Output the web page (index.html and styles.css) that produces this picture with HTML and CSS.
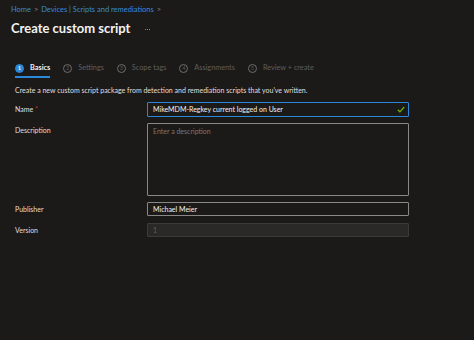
FILE: index.html
```html
<!DOCTYPE html>
<html lang="en">
<head>
    <meta charset="UTF-8">
    <title>Create custom script</title>
    <link rel="stylesheet" href="styles.css">
</head>
<body>
    <div class="breadcrumb">
        <a href="#">Home</a> <span class="sep">&gt;</span> <a href="#">Devices | Scripts and remediations</a> <span class="sep">&gt;</span>
    </div>
    <div class="title-row">
        <h1 class="title">Create custom script</h1>
        <span class="more"><i></i><i></i><i></i></span>
    </div>

    <div class="steps">
        <div class="step active"><span class="num">1</span>Basics</div>
        <div class="step"><span class="num">2</span>Settings</div>
        <div class="step"><span class="num">3</span>Scope tags</div>
        <div class="step"><span class="num">4</span>Assignments</div>
        <div class="step"><span class="num">5</span>Review + create</div>
    </div>

    <p class="intro">Create a new custom script package from detection and remediation scripts that you've written.</p>

    <div class="form">
        <div class="row">
            <label class="label">Name <span class="req">*</span></label>
            <div class="field valid">
                <span class="value">MikeMDM-Regkey current logged on User</span>
                <svg class="check" width="8" height="7" viewBox="0 0 8 7"><path d="M0.8 3.8 L2.9 5.8 L7.2 1" fill="none" stroke="#6bb700" stroke-width="1.2"/></svg>
            </div>
        </div>
        <div class="row">
            <label class="label">Description</label>
            <div class="field area"><span class="placeholder">Enter a description</span></div>
        </div>
        <div class="row">
            <label class="label">Publisher</label>
            <div class="field short"><span class="value">Michael Meier</span></div>
        </div>
        <div class="row">
            <label class="label">Version</label>
            <div class="field short disabled"><span class="value">1</span></div>
        </div>
    </div>
</body>
</html>
```
FILE: styles.css
```css
body {
    margin: 0;
    padding: 5px 0 0 11px;
    background-color: #1b1a19;
    color: #d2d0ce;
    font-family: Lato, "Open Sans", sans-serif;
    width: 474px;
    height: 340px;
    box-sizing: border-box;
    overflow: hidden;
}
.breadcrumb {
    font-size: 7.5px;
    line-height: 10px;
    color: #3a8ad6;
}
.breadcrumb a {
    color: #3a8ad6;
    text-decoration: none;
}
.breadcrumb .sep {
    color: #8a8886;
    margin: 0 1px;
}
.title-row {
    display: flex;
    align-items: center;
    gap: 15px;
    margin-top: 3px;
}
.title {
    margin: 0;
    font-size: 13px;
    line-height: 20px;
    font-weight: 700;
    color: #f3f2f1;
}
.more {
    display: flex;
    gap: 1px;
    padding-top: 2px;
}
.more i {
    width: 1px;
    height: 1px;
    background-color: #8a8886;
}
.steps {
    display: flex;
    gap: 13px;
    margin-top: 25px;
    padding-left: 4px;
}
.step {
    display: flex;
    align-items: center;
    gap: 6px;
    font-size: 7.3px;
    line-height: 10px;
    color: #5f5e5c;
    padding-bottom: 3px;
    border-bottom: 2px solid transparent;
}
.step .num {
    width: 7px;
    height: 7px;
    border: 1px solid #6e6d6b;
    border-radius: 50%;
    font-size: 5px;
    line-height: 7px;
    text-align: center;
}
.step.active {
    color: #f3f2f1;
    font-weight: 700;
    border-bottom-color: #2b88d8;
}
.step.active .num {
    background-color: #2b88d8;
    border-color: #2b88d8;
    color: #fff;
}
.intro {
    margin: 7px 0 0 4px;
    font-size: 7px;
    line-height: 10px;
    color: #e1dfdd;
}
.form {
    display: flex;
    flex-direction: column;
    gap: 6px;
    margin-top: 7px;
    padding-left: 4px;
}
.row {
    display: flex;
    align-items: flex-start;
}
.label {
    width: 132px;
    font-size: 7px;
    line-height: 15px;
    color: #e1dfdd;
}
.req {
    color: #d13438;
}
.field {
    position: relative;
    width: 262px;
    height: 15px;
    box-sizing: border-box;
    border: 1px solid #8a8886;
    border-radius: 1px;
    padding: 0 5px;
    font-size: 7px;
    line-height: 13px;
    color: #f3f2f1;
}
.field.short {
    height: 14px;
    line-height: 12px;
}
.field.valid {
    border-color: #2b88d8;
}
.field .check {
    position: absolute;
    right: 3px;
    top: 3px;
}
.field.area {
    height: 73px;
    line-height: 15px;
}
.placeholder {
    color: #7a7876;
}
.field.disabled {
    background-color: #2a2928;
    border-color: #3b3a39;
}
.field.disabled .value {
    color: #5f5e5c;
}
```
